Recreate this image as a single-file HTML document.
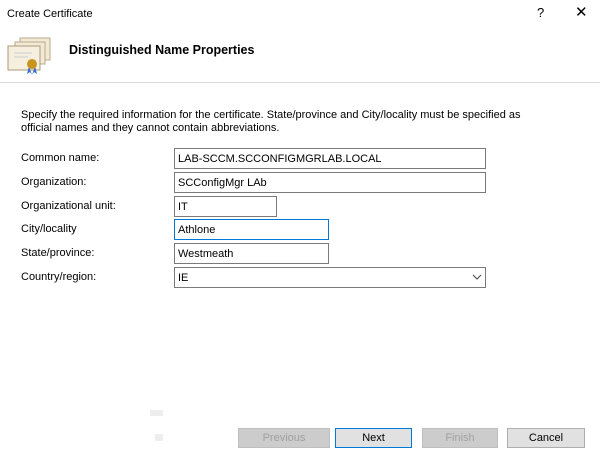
<!DOCTYPE html><html><head><style>
body{margin:0;width:600px;height:457px;background:#fff;font-family:"Liberation Sans",sans-serif;font-size:11px;color:#000;position:relative;overflow:hidden}
.a{position:absolute}
.in{position:absolute;border:1px solid #7a7a7a;box-sizing:border-box;height:21px;padding:4px 0 0 3px;font-size:11px;background:#fff}
.lb{position:absolute;left:21px}
.bt{position:absolute;top:428px;height:20px;box-sizing:border-box;border:1px solid #adadad;background:#e1e1e1;text-align:center;line-height:18px}
</style></head><body>
<div class="a" style="left:7px;top:8px">Create Certificate</div>
<div class="a" style="left:537px;top:5px;font-size:13px">?</div>
<div class="a" style="left:575px;top:3px;font-size:15px">✕</div>
<svg class="a" style="left:6px;top:36px" width="46" height="40">
<rect x="14" y="2" width="30" height="22" fill="#f3ead6" stroke="#b9a98a"/>
<rect x="9" y="6" width="30" height="22" fill="#f3ead6" stroke="#b9a98a"/>
<rect x="2" y="10" width="32" height="24" fill="#f6efdf" stroke="#a99a7a"/>
<line x1="8" y1="17" x2="26" y2="17" stroke="#ccc"/><line x1="8" y1="21" x2="22" y2="21" stroke="#ccc"/>
<path d="M23 30 l-2 8 l3-2 l2 3 z M29 30 l2 8 l-3-2 l-2 3z" fill="#3a6fd0"/>
<circle cx="26" cy="28" r="5" fill="#c8941c"/></svg>
<div class="a" style="left:69px;top:43px;font-weight:bold;font-size:12.5px">Distinguished Name Properties</div>
<div class="a" style="left:0;top:82px;width:600px;height:1px;background:#d9d9d9"></div>
<div class="a" style="left:21px;top:109px;width:560px;line-height:13px">Specify the required information for the certificate. State/province and City/locality must be specified as<br>official names and they cannot contain abbreviations.</div>
<div class="lb" style="top:152px">Common name:</div>
<div class="lb" style="top:176px">Organization:</div>
<div class="lb" style="top:200px">Organizational unit:</div>
<div class="lb" style="top:223px">City/locality</div>
<div class="lb" style="top:247px">State/province:</div>
<div class="lb" style="top:271px">Country/region:</div>
<div class="in" style="left:174px;top:148px;width:312px">LAB-SCCM.SCCONFIGMGRLAB.LOCAL</div>
<div class="in" style="left:174px;top:172px;width:312px">SCConfigMgr LAb</div>
<div class="in" style="left:174px;top:196px;width:103px">IT</div>
<div class="in" style="left:174px;top:219px;width:155px;border-color:#0078d7">Athlone</div>
<div class="in" style="left:174px;top:243px;width:155px">Westmeath</div>
<div class="in" style="left:174px;top:267px;width:312px">IE</div>
<svg class="a" style="left:472px;top:273px" width="10" height="8"><path d="M1 2 L5 6 L9 2" fill="none" stroke="#444"/></svg>
<div class="a" style="left:150px;top:410px;width:13px;height:6px;background:#eee"></div>
<div class="a" style="left:155px;top:434px;width:8px;height:7px;background:#eee"></div>
<div class="bt" style="left:238px;width:92px;color:#a0a0a0;background:#ccc;border-color:#bfbfbf">Previous</div>
<div class="bt" style="left:335px;width:77px;border:1px solid #0078d7">Next</div>
<div class="bt" style="left:422px;width:76px;color:#a0a0a0;background:#ccc;border-color:#bfbfbf">Finish</div>
<div class="bt" style="left:507px;width:78px">Cancel</div>
</body></html>
